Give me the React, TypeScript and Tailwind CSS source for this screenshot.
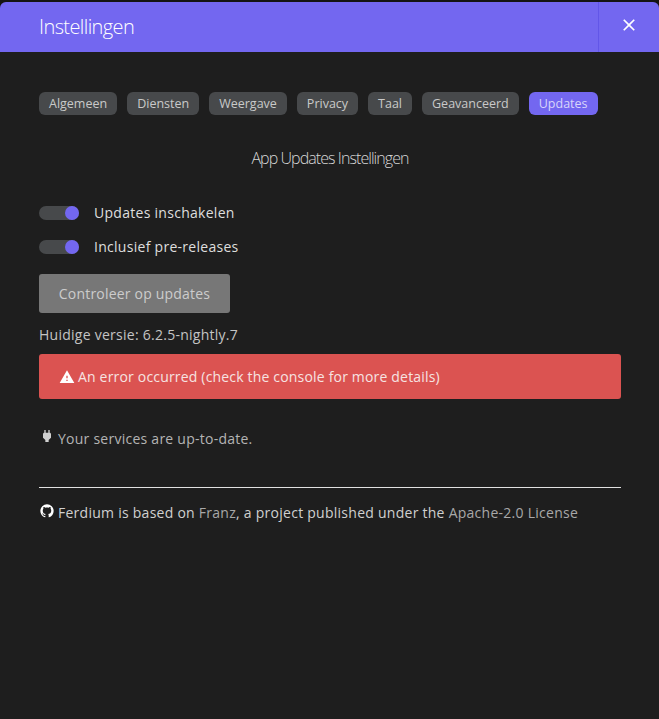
import React from 'react';

const tabs = ['Algemeen', 'Diensten', 'Weergave', 'Privacy', 'Taal', 'Geavanceerd', 'Updates'];

const MdiIcon = ({ d, className }: { d: string; className: string }) => (
  <svg viewBox="0 0 24 24" fill="currentColor" className={className}>
    <path d={d} />
  </svg>
);

const closePath = 'M19,6.41L17.59,5L12,10.59L6.41,5L5,6.41L10.59,12L5,17.59L6.41,19L12,13.41L17.59,19L19,17.59L13.41,12L19,6.41Z';
const alertPath = 'M13 14H11V10H13M13 18H11V16H13M1 21H23L12 2L1 21Z';
const plugPath = 'M16,7V3H14V7H10V3H8V7H8C7,7 6,8 6,9V14.5L9.5,18V21H14.5V18L18,14.5V9C18,8 17,7 16,7Z';
const githubPath =
  'M12,2A10,10 0 0,0 2,12C2,16.42 4.87,20.17 8.84,21.5C9.34,21.58 9.5,21.27 9.5,21C9.5,20.77 9.5,20.14 9.5,19.31C6.73,19.91 6.14,17.97 6.14,17.97C5.68,16.81 5.03,16.5 5.03,16.5C4.12,15.88 5.1,15.9 5.1,15.9C6.1,15.97 6.63,16.93 6.63,16.93C7.5,18.45 8.97,18 9.54,17.76C9.63,17.11 9.89,16.67 10.17,16.42C7.95,16.17 5.62,15.31 5.62,11.5C5.62,10.39 6,9.5 6.65,8.79C6.55,8.54 6.2,7.5 6.75,6.15C6.75,6.15 7.59,5.88 9.5,7.17C10.29,6.95 11.15,6.84 12,6.84C12.85,6.84 13.71,6.95 14.5,7.17C16.41,5.88 17.25,6.15 17.25,6.15C17.8,7.5 17.45,8.54 17.35,8.79C18,9.5 18.38,10.39 18.38,11.5C18.38,15.32 16.04,16.16 13.81,16.41C14.17,16.72 14.5,17.33 14.5,18.26C14.5,19.6 14.5,20.68 14.5,21C14.5,21.27 14.66,21.59 15.17,21.5C19.14,20.16 22,16.42 22,12A10,10 0 0,0 12,2Z';

const Toggle = ({ label }: { label: string }) => (
  <div className="flex h-[20px] items-center">
    <div className="flex h-[14px] w-[40px] justify-end rounded-full bg-[#47494b]">
      <div className="h-[14px] w-[14px] rounded-full bg-[#7367f0]" />
    </div>
    <span className="mb-[2px] ml-[15px] text-[14px] tracking-[0.28px] text-[#dedede]">{label}</span>
  </div>
);

export default function App() {
  return (
    <div className="h-[719px] w-[659px] overflow-hidden bg-[#141414] pt-[2px] font-['Open_Sans',sans-serif]">
      <div className="flex h-[717px] flex-col rounded-t-[6px] bg-[#1e1e1e]">
        <header className="flex h-[50px] shrink-0 items-stretch rounded-t-[6px] bg-[#7367f0]">
          <h1 className="flex-1 pl-[39px] pt-[9px] text-[20px] font-light leading-[32px] tracking-[-0.6px] text-white">
            Instellingen
          </h1>
          <div className="flex w-[61px] items-center justify-center border-l border-[#6256e8] pb-[5px]">
            <MdiIcon d={closePath} className="h-[20px] w-[20px] text-white" />
          </div>
        </header>

        <main className="flex flex-col pl-[39px] pr-[38px]">
          <nav className="mt-[40px] flex gap-[10px]">
            {tabs.map((tab) => (
              <span
                key={tab}
                className={
                  tab === 'Updates'
                    ? 'flex h-[23px] items-center rounded-[6px] bg-[#7367f0] px-[10px] pt-[1px] text-[12.5px] text-[#d8d5fb]'
                    : 'flex h-[23px] items-center rounded-[6px] bg-[#47494b] px-[10px] pt-[1px] text-[12.5px] text-[#c9c9c9]'
                }
              >
                {tab}
              </span>
            ))}
          </nav>

          <h2 className="mt-[32px] text-center text-[16px] font-light leading-[22px] tracking-[-0.93px] text-[#d6d6d6]">
            App Updates Instellingen
          </h2>

          <div className="mt-[34px] flex flex-col gap-[14px]">
            <Toggle label="Updates inschakelen" />
            <Toggle label="Inclusief pre-releases" />
          </div>

          <button className="mt-[17px] h-[39px] w-[191px] rounded-[3px] bg-[#777777] text-[14px] tracking-[0.2px] text-[#cccccc]">
            Controleer op updates
          </button>

          <p className="mt-[12px] text-[14px] leading-[20px] tracking-[0.26px] text-[#c4c4c4]">
            Huidige versie: 6.2.5-nightly.7
          </p>

          <div className="mt-[9px] flex h-[45px] items-center rounded-[3px] bg-[#db5351] pl-[20px] text-[14px] tracking-[0.18px] text-[#f6e3e2]">
            <MdiIcon d={alertPath} className="mr-[3px] h-[16px] w-[16px] text-white" />
            <span className="mb-[1px]">An error occurred (check the console for more details)</span>
          </div>

          <div className="mt-[29px] flex h-[20px] items-center text-[14px] tracking-[0.25px] text-[#b4b4b4]">
            <MdiIcon d={plugPath} className="mb-[4px] mr-[3px] h-[16px] w-[16px] text-[#d0d0d0]" />
            Your services are up-to-date.
          </div>

          <hr className="mt-[39px] border-0 border-t border-[#e0e0e0]" />

          <div className="mt-[14px] flex h-[20px] items-center text-[14px] tracking-[0.26px] text-[#d0d0d0]">
            <MdiIcon d={githubPath} className="mb-[3px] mr-[3px] h-[16px] w-[16px] text-white" />
            <span>
              Ferdium is based on <span className="text-[#a8a8a8]">Franz</span>, a project published under the{' '}
              <span className="text-[#a8a8a8]">Apache-2.0 License</span>
            </span>
          </div>
        </main>
      </div>
    </div>
  );
}
